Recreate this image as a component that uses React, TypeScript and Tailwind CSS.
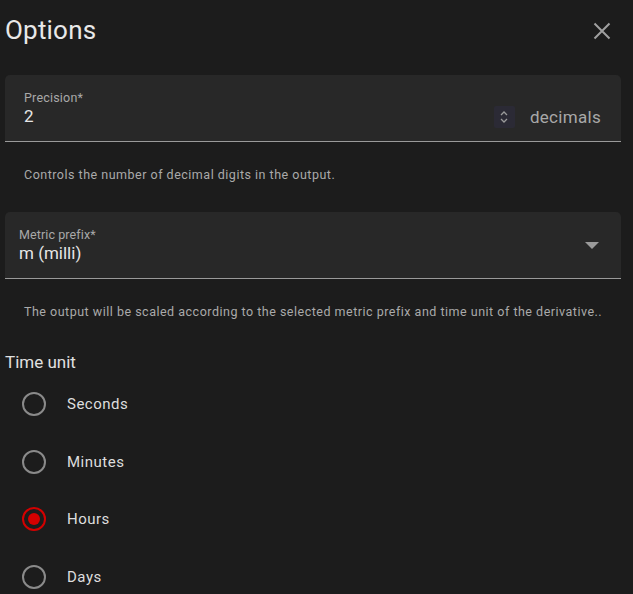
import React from "react";

const radios = ["Seconds", "Minutes", "Hours", "Days"];

export default function App() {
  return (
    <div
      className="w-[633px] h-[594px] overflow-hidden bg-[#1c1c1c] text-[#e6e6e6]"
      style={{ fontFamily: "Roboto, 'Liberation Sans', sans-serif" }}
    >
      <div className="flex items-center justify-between pl-[5px] pr-[22px] pt-[13px] h-[62px]">
        <h1 className="text-[26px] leading-[34px] text-[#e8e8e8] tracking-[0.2px] mt-[-16px]">Options</h1>
        <svg width="18" height="18" viewBox="0 0 18 18" className="text-[#a0a0a0] mt-[-14px]">
          <path d="M1.5 1.5 L16.5 16.5 M16.5 1.5 L1.5 16.5" stroke="currentColor" strokeWidth="2" fill="none" />
        </svg>
      </div>

      <div className="ml-[5px] w-[616px] mt-[13px]">
        <div className="h-[67px] bg-[#282828] rounded-t-[5px] border-b border-[#9a9a9a] flex items-end pl-[19px] pr-[20px] pb-[14px]">
          <div className="flex-1 flex flex-col">
            <span className="text-[12.5px] leading-[15px] text-[#a9a9a9] tracking-[0.2px]">Precision*</span>
            <span className="text-[17px] leading-[22px] text-[#e6e6e6]">2</span>
          </div>
          <div className="flex items-center gap-[15px] mb-[-1px]">
            <div className="w-[21px] h-[22px] bg-[#2b2a35] rounded-[2px] flex items-center justify-center">
              <svg width="10" height="16" viewBox="0 0 10 16">
                <path d="M2 6 L5 3 L8 6 M2 10 L5 13 L8 10" stroke="#9a9a9a" strokeWidth="1.3" fill="none" />
              </svg>
            </div>
            <span className="text-[17px] leading-[22px] text-[#a8a8a8] tracking-[0.3px]">decimals</span>
          </div>
        </div>
        <div className="pl-[19px] pt-[25px] text-[12.5px] leading-[15px] text-[#aaaaaa] tracking-[0.5px]">
          Controls the number of decimal digits in the output.
        </div>
      </div>

      <div className="ml-[5px] w-[616px] mt-[30px]">
        <div className="h-[67px] bg-[#282828] rounded-t-[5px] border-b border-[#9a9a9a] flex items-end pl-[14px] pr-[22px] pb-[14px]">
          <div className="flex-1 flex flex-col">
            <span className="text-[12.5px] leading-[15px] text-[#a9a9a9] tracking-[0.1px]">Metric prefix*</span>
            <span className="text-[17px] leading-[22px] text-[#e6e6e6]">m (milli)</span>
          </div>
          <svg width="14" height="8" viewBox="0 0 14 8" className="mb-[14px]">
            <path d="M0 0 L14 0 L7 7 Z" fill="#9a9a9a" />
          </svg>
        </div>
        <div className="pl-[19px] pt-[25px] text-[12.5px] leading-[15px] text-[#aaaaaa] tracking-[0.5px]">
          The output will be scaled according to the selected metric prefix and time unit of the derivative..
        </div>
      </div>

      <div className="pl-[5px] mt-[32px] text-[17px] leading-[22px] text-[#e0e0e0]">Time unit</div>

      <div className="flex flex-col mt-[2px] pl-[22px]">
        {radios.map((r) => {
          const checked = r === "Hours";
          return (
            <div key={r} className="flex items-center h-[57.7px]">
              <div
                className={`w-[24px] h-[24px] rounded-full border-2 flex items-center justify-center ${
                  checked ? "border-[#d40000]" : "border-[#8a8a8a]"
                }`}
              >
                {checked && <div className="w-[12px] h-[12px] rounded-full bg-[#d40000]" />}
              </div>
              <span className="ml-[21px] text-[15px] leading-[20px] text-[#dedede] tracking-[0.5px]">{r}</span>
            </div>
          );
        })}
      </div>
    </div>
  );
}
